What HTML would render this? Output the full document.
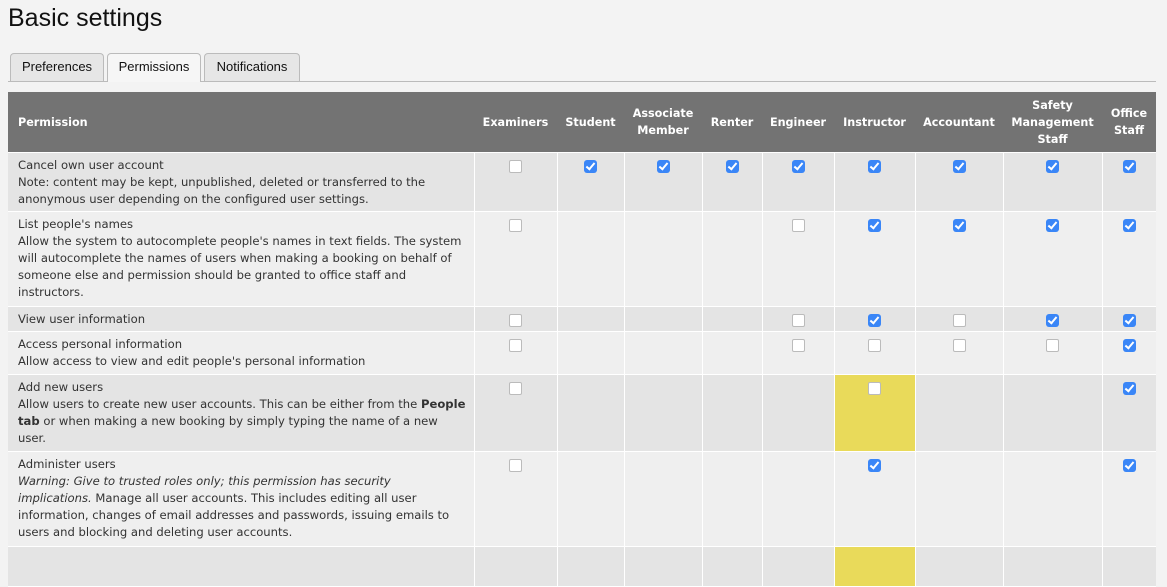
<!DOCTYPE html><html><head><style>
body{margin:0;background:#f3f3f3;font-family:"Liberation Sans",sans-serif;width:1167px;height:549px;overflow:hidden;position:relative}
h1{position:absolute;left:8px;top:4px;margin:0;font-weight:normal;font-size:25px;color:#111}
.tabs{position:absolute;left:8px;top:53px;width:1148px;height:28px;border-bottom:1px solid #bbb}
.tab{position:absolute;top:0;height:27px;border:1px solid #bbb;border-bottom:none;border-radius:4px 4px 0 0;background:#e6e6e6;font-size:13px;line-height:25px;text-align:center;color:#111}
.tab.a{background:#f6f6f6;height:28px}
table{position:absolute;left:8px;top:92px;border-collapse:collapse;table-layout:fixed;width:1148px;font-family:"DejaVu Sans",sans-serif;font-size:11.6px;color:#333}
th{background:#737373;color:#fff;font-weight:bold;font-size:11.2px;height:60px;padding:0;line-height:17px;text-align:center;border:none}
th:first-child{text-align:left;padding-left:10px}
td{border:1px solid #fff;vertical-align:top;padding:4px 0 2px;line-height:17px;text-align:center}
td:first-child{text-align:left;padding-left:10px;border-left:none;white-space:nowrap}
td:last-child{border-right:none}
tr.o td{background:#e4e4e4}tr.e td{background:#efefef}
td.y{background:#e9da5a!important}
.c{display:inline-block;width:11px;height:11px;border:1px solid #bbb;background:#fff;border-radius:2px;margin-top:3px;vertical-align:top}
.k{display:inline-block;width:13px;height:13px;border-radius:3px;background:#3a86f7;margin-top:3px;position:relative;vertical-align:top}
.k:after{content:"";position:absolute;left:4px;top:1px;width:3px;height:7px;border:solid #fff;border-width:0 2px 2px 0;transform:rotate(40deg)}
</style></head><body>
<h1>Basic settings</h1>
<div class="tabs">
<div class="tab" style="left:2px;width:92px">Preferences</div>
<div class="tab a" style="left:99px;width:92px">Permissions</div>
<div class="tab" style="left:196px;width:94px">Notifications</div>
</div>
<table>
<colgroup><col style="width:466px"><col style="width:83px"><col style="width:67px"><col style="width:78px"><col style="width:60px"><col style="width:72px"><col style="width:81px"><col style="width:88px"><col style="width:99px"><col style="width:54px"></colgroup>
<tr><th>Permission</th><th>Examiners</th><th>Student</th><th>Associate<br>Member</th><th>Renter</th><th>Engineer</th><th>Instructor</th><th>Accountant</th><th>Safety<br>Management<br>Staff</th><th>Office<br>Staff</th></tr>
<tr class="o" style="height:59px"><td>Cancel own user account<br>Note: content may be kept, unpublished, deleted or transferred to the<br>anonymous user depending on the configured user settings.</td><td><span class="c"></span></td><td><span class="k"></span></td><td><span class="k"></span></td><td><span class="k"></span></td><td><span class="k"></span></td><td><span class="k"></span></td><td><span class="k"></span></td><td><span class="k"></span></td><td><span class="k"></span></td></tr>
<tr class="e" style="height:95px"><td>List people's names<br>Allow the system to autocomplete people's names in text fields. The system<br>will autocomplete the names of users when making a booking on behalf of<br>someone else and permission should be granted to office staff and<br>instructors.</td><td><span class="c"></span></td><td></td><td></td><td></td><td><span class="c"></span></td><td><span class="k"></span></td><td><span class="k"></span></td><td><span class="k"></span></td><td><span class="k"></span></td></tr>
<tr class="o" style="height:25px"><td>View user information</td><td><span class="c"></span></td><td></td><td></td><td></td><td><span class="c"></span></td><td><span class="k"></span></td><td><span class="c"></span></td><td><span class="k"></span></td><td><span class="k"></span></td></tr>
<tr class="e" style="height:43px"><td>Access personal information<br>Allow access to view and edit people's personal information</td><td><span class="c"></span></td><td></td><td></td><td></td><td><span class="c"></span></td><td><span class="c"></span></td><td><span class="c"></span></td><td><span class="c"></span></td><td><span class="k"></span></td></tr>
<tr class="o" style="height:77px"><td>Add new users<br>Allow users to create new user accounts. This can be either from the <b>People<br>tab</b> or when making a new booking by simply typing the name of a new<br>user.</td><td><span class="c"></span></td><td></td><td></td><td></td><td></td><td class="y"><span class="c"></span></td><td></td><td></td><td><span class="k"></span></td></tr>
<tr class="e" style="height:95px"><td>Administer users<br><i>Warning: Give to trusted roles only; this permission has security<br>implications.</i> Manage all user accounts. This includes editing all user<br>information, changes of email addresses and passwords, issuing emails to<br>users and blocking and deleting user accounts.</td><td><span class="c"></span></td><td></td><td></td><td></td><td></td><td><span class="k"></span></td><td></td><td></td><td><span class="k"></span></td></tr>
<tr class="o" style="height:40px"><td>&nbsp;</td><td></td><td></td><td></td><td></td><td></td><td class="y"></td><td></td><td></td><td></td></tr>
</table>
</body></html>
